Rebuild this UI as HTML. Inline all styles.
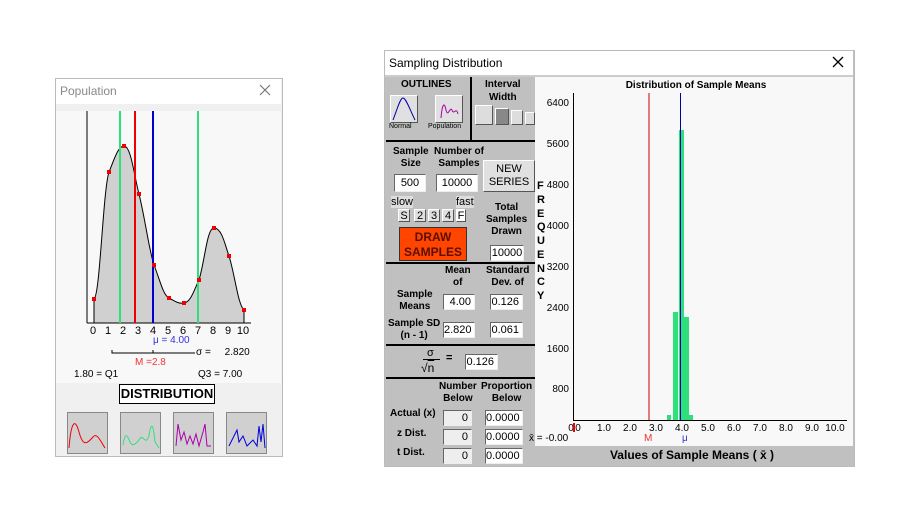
<!DOCTYPE html><html><head><style>
body{margin:0;width:918px;height:508px;background:#fff;position:relative;overflow:hidden;font-family:"Liberation Sans",Arial,sans-serif;}
.a{position:absolute;}
.t{position:absolute;white-space:nowrap;font-size:11px;color:#000;}
.b{font-weight:bold;font-size:10px;}
.in{position:absolute;background:#fff;border-top:1px solid #666;border-left:1px solid #666;border-bottom:1px solid #eee;border-right:1px solid #eee;font-size:11px;text-align:right;box-sizing:border-box;padding-right:3px;line-height:14px;height:16px;}
.btn{position:absolute;background:#e0e0e0;border:1px solid #fff;border-right-color:#555;border-bottom-color:#555;box-sizing:border-box;font-size:11px;text-align:center;}
.ln{position:absolute;background:#000;}
</style></head><body>
<!-- Population window -->
<div class="a" style="left:55px;top:78px;width:226px;height:377px;border:1px solid #bbb;background:#f0f0f0;"></div>
<div class="a" style="left:56px;top:79px;width:225px;height:25px;background:#fff;"></div>
<div class="t" style="left:60px;top:84px;font-size:12px;color:#888;">Population</div>
<svg class="a" style="left:259px;top:84px" width="12" height="12"><path d="M1,1 L11,11 M11,1 L1,11" stroke="#777" stroke-width="1.2"/></svg>
<div class="a" style="left:56px;top:111px;width:225px;height:272px;background:#f8f8f8;"></div>
<svg class="a" style="left:0;top:0" width="300" height="460">
<path d="M94,323 L94,299 C100,296 103,190 109,172 C114,160 118,146 124,146 C131,146 134,175 139,194 C145,218 149,250 154,265 C160,280 163,295 169,298 C175,301 178,304 184,303 C191,302 194,290 199,280 C205,260 207,228 214,228 C222,228 225,245 229,256 C235,275 238,305 244,310 L244,323 Z" fill="#d0d0d0" stroke="#000" stroke-width="1"/>
<line x1="87" y1="111" x2="87" y2="323" stroke="#000"/>
<line x1="87" y1="323" x2="251" y2="323" stroke="#000"/>
<line x1="120" y1="111" x2="120" y2="323" stroke="#2ee07a" stroke-width="2"/>
<line x1="135" y1="111" x2="135" y2="323" stroke="#e00" stroke-width="2"/>
<line x1="153" y1="111" x2="153" y2="323" stroke="#0000d0" stroke-width="2"/>
<line x1="198" y1="111" x2="198" y2="323" stroke="#2ee07a" stroke-width="2"/>
<g fill="#e00"><rect x="92" y="297" width="4" height="4"/><rect x="107" y="170" width="4" height="4"/><rect x="122" y="144" width="4" height="4"/><rect x="137" y="192" width="4" height="4"/><rect x="152" y="263" width="4" height="4"/><rect x="167" y="296" width="4" height="4"/><rect x="182" y="301" width="4" height="4"/><rect x="197" y="278" width="4" height="4"/><rect x="212" y="226" width="4" height="4"/><rect x="227" y="254" width="4" height="4"/><rect x="242" y="308" width="4" height="4"/></g>
<g font-family="Liberation Sans,Arial" font-size="11" text-anchor="middle"><text x="93" y="334">0</text><text x="108" y="334">1</text><text x="123" y="334">2</text><text x="138" y="334">3</text><text x="153" y="334">4</text><text x="168" y="334">5</text><text x="183" y="334">6</text><text x="198" y="334">7</text><text x="213" y="334">8</text><text x="228" y="334">9</text><text x="243" y="334">10</text></g>
<path d="M112,350 V353 H195 M153,350 V353" stroke="#000" fill="none"/>
</svg>
<div class="t" style="left:153px;top:335px;font-size:10px;color:#33d;">μ = 4.00</div>
<div class="t" style="left:196px;top:347px;font-size:10px;">σ =&nbsp;&nbsp;&nbsp;&nbsp;&nbsp;2.820</div>
<div class="t" style="left:135px;top:357px;font-size:10px;color:#e33;">M =2.8</div>
<div class="t" style="left:74px;top:369px;font-size:10px;">1.80 = Q1</div>
<div class="t" style="left:198px;top:369px;font-size:10px;">Q3 = 7.00</div>
<div class="a" style="left:119px;top:384px;width:96px;height:20px;background:#fff;border:1px solid #000;box-sizing:border-box;font-size:13px;font-weight:bold;text-align:center;line-height:18px;">DISTRIBUTION</div>
<svg class="a" style="left:67px;top:412px" width="202" height="43">
<g fill="#d0d0d0" stroke="#888"><rect x="0.5" y="0.5" width="40" height="41"/><rect x="53.5" y="0.5" width="40" height="41"/><rect x="106.5" y="0.5" width="40" height="41"/><rect x="159.5" y="0.5" width="40" height="41"/></g>
<path d="M2,36 C4,10 8,5 12,20 C16,35 20,32 26,25 C30,20 34,30 38,36" stroke="#e00" fill="none"/>
<path d="M56,33 C58,20 60,22 63,30 C66,36 70,30 72,28 C76,20 78,35 82,24 C84,10 86,10 88,30 L92,36" stroke="#2ee07a" fill="none"/>
<path d="M109,34 L111,12 L114,28 L117,20 L120,32 L123,24 L126,32 L129,22 L132,34 L136,20 L138,12 L140,34 L144,34" stroke="#a0a" fill="none"/>
<path d="M162,34 L166,26 L170,18 L172,30 L176,24 L180,34 L186,28 L190,34 L192,14 L194,30 L196,12 L198,36" stroke="#00d" fill="none"/>
</svg>

<!-- Sampling window -->
<div class="a" style="left:384px;top:50px;width:469px;height:415px;border:1px solid #bbb;background:#c0c0c0;"></div>
<div class="a" style="left:385px;top:51px;width:468px;height:24px;background:#fff;"></div>
<div class="t" style="left:389px;top:56px;font-size:12px;">Sampling Distribution</div>
<svg class="a" style="left:832px;top:56px" width="12" height="12"><path d="M1,1 L11,11 M11,1 L1,11" stroke="#000" stroke-width="1.3"/></svg>
<div class="a" style="left:535px;top:77px;width:318px;height:369px;background:#f8f8f8;"></div>
<div class="ln" style="left:385px;top:75px;width:468px;height:2px;background:#ccc"></div>
<!-- left panel lines -->
<div class="ln" style="left:470px;top:77px;width:2px;height:63px"></div>
<div class="ln" style="left:386px;top:140px;width:149px;height:2px"></div>
<div class="ln" style="left:386px;top:262px;width:149px;height:2px"></div>
<div class="ln" style="left:386px;top:344px;width:149px;height:2px"></div>
<div class="ln" style="left:386px;top:377px;width:149px;height:2px"></div>
<div class="t b" style="left:401px;top:79px;">OUTLINES</div>
<div class="t b" style="left:485px;top:78px;line-height:13px;text-align:center;">Interval<br>Width</div>
<div class="btn" style="left:390px;top:95px;width:28px;height:28px;"></div>
<svg class="a" style="left:391px;top:96px" width="26" height="26"><path d="M2,24 C6,14 9,2 12,2 C15,2 19,14 24,24" stroke="#00a" fill="none"/></svg>
<div class="t" style="left:389px;top:123px;font-size:7px;">Normal</div>
<div class="btn" style="left:435px;top:95px;width:28px;height:28px;"></div>
<svg class="a" style="left:436px;top:96px" width="26" height="26"><path d="M5,22 C6,10 8,4 10,14 C12,22 14,10 16,14 C18,20 20,10 22,18" stroke="#a0a" fill="none"/></svg>
<div class="t" style="left:428px;top:123px;font-size:7px;">Population</div>
<div class="btn" style="left:475px;top:105px;width:18px;height:20px;background:#ddd"></div>
<div class="btn" style="left:495px;top:108px;width:14px;height:17px;background:#888"></div>
<div class="btn" style="left:511px;top:110px;width:12px;height:15px;background:#ddd"></div>
<div class="btn" style="left:525px;top:112px;width:10px;height:13px;background:#ddd"></div>
<div class="t b" style="left:393px;top:146px;line-height:12px;text-align:center;">Sample<br>Size</div>
<div class="t b" style="left:434px;top:146px;line-height:12px;text-align:center;">Number of<br>Samples</div>
<div class="btn" style="left:483px;top:160px;width:52px;height:32px;line-height:13px;padding-top:2px;font-size:11px;">NEW<br>SERIES</div>
<div class="in" style="left:394px;top:174px;width:32px;height:18px;text-align:center;padding:0;line-height:17px;">500</div>
<div class="in" style="left:436px;top:174px;width:42px;height:18px;text-align:center;padding:0;line-height:17px;">10000</div>
<div class="t" style="left:391px;top:196px;background:#ddd;">slow</div>
<div class="t" style="left:456px;top:196px;background:#ddd;">fast</div>
<div class="btn" style="left:398px;top:209px;width:12px;height:13px;line-height:12px;">S</div>
<div class="btn" style="left:414px;top:209px;width:12px;height:13px;line-height:12px;">2</div>
<div class="btn" style="left:428px;top:209px;width:12px;height:13px;line-height:12px;">3</div>
<div class="btn" style="left:442px;top:209px;width:12px;height:13px;line-height:12px;">4</div>
<div class="btn" style="left:456px;top:209px;width:10px;height:13px;line-height:12px;background:#fff;">F</div>
<div class="t b" style="left:486px;top:202px;line-height:12px;text-align:center;">Total<br>Samples<br>Drawn</div>
<div class="a" style="left:399px;top:227px;width:68px;height:34px;background:#ff4500;border:1px solid #333;box-sizing:border-box;font-size:12px;font-weight:bold;color:#5a1000;text-align:center;line-height:15px;padding-top:2px;">DRAW<br>SAMPLES</div>
<div class="in" style="left:490px;top:245px;width:34px;text-align:center;padding:0;">10000</div>
<div class="t b" style="left:445px;top:265px;line-height:12px;text-align:center;">Mean<br>of</div>
<div class="t b" style="left:486px;top:265px;line-height:12px;text-align:center;">Standard<br>Dev. of</div>
<div class="t b" style="left:397px;top:289px;line-height:12px;text-align:center;">Sample<br>Means</div>
<div class="in" style="left:443px;top:294px;width:32px;">4.00</div>
<div class="in" style="left:490px;top:294px;width:33px;">0.126</div>
<div class="t b" style="left:388px;top:318px;line-height:12px;text-align:center;">Sample SD<br>(n - 1)</div>
<div class="in" style="left:443px;top:322px;width:32px;">2.820</div>
<div class="in" style="left:490px;top:322px;width:33px;">0.061</div>
<div class="t" style="left:427px;top:347px;">σ</div>
<div class="ln" style="left:423px;top:359px;width:17px;height:1px"></div>
<div class="t" style="left:421px;top:361px;font-size:12px;">√<u style="text-decoration:overline">n</u></div>
<div class="t b" style="left:446px;top:352px;font-size:11px;">=</div>
<div class="in" style="left:465px;top:354px;width:33px;">0.126</div>
<div class="t b" style="left:439px;top:381px;line-height:12px;text-align:center;">Number<br>Below</div>
<div class="t b" style="left:481px;top:381px;line-height:12px;text-align:center;">Proportion<br>Below</div>
<div class="t b" style="left:390px;top:408px;">Actual (x)</div>
<div class="t b" style="left:397px;top:428px;">z Dist.</div>
<div class="t b" style="left:397px;top:447px;">t Dist.</div>
<div class="in" style="left:443px;top:410px;width:29px;background:#eee">0</div>
<div class="in" style="left:485px;top:410px;width:38px;">0.0000</div>
<div class="in" style="left:443px;top:429px;width:29px;background:#eee">0</div>
<div class="in" style="left:485px;top:429px;width:38px;">0.0000</div>
<div class="in" style="left:443px;top:448px;width:29px;background:#eee">0</div>
<div class="in" style="left:485px;top:448px;width:38px;">0.0000</div>
<!-- chart -->
<svg class="a" style="left:0;top:0" width="918" height="508" font-family="Liberation Sans,Arial" font-size="10">
<text x="696" y="88" text-anchor="middle" font-weight="bold">Distribution of Sample Means</text>
<line x1="573.5" y1="93" x2="573.5" y2="420" stroke="#000"/>
<line x1="573" y1="420.5" x2="847" y2="420.5" stroke="#000"/>
<line x1="649" y1="93" x2="649" y2="420" stroke="#c00"/>
<rect x="667" y="415" width="4" height="5" fill="#2ee07a"/>
<rect x="673" y="312" width="5" height="108" fill="#2ee07a"/>
<rect x="679" y="130" width="5" height="290" fill="#2ee07a"/>
<rect x="684" y="317" width="5" height="103" fill="#2ee07a"/>
<rect x="689" y="415" width="4" height="5" fill="#2ee07a"/>
<line x1="680.5" y1="93" x2="680.5" y2="420" stroke="#00a"/>
<g text-anchor="end"><text x="569" y="106">6400</text><text x="569" y="147">5600</text><text x="569" y="188">4800</text><text x="569" y="229">4000</text><text x="569" y="270">3200</text><text x="569" y="311">2400</text><text x="569" y="352">1600</text><text x="569" y="392">800</text></g>
<g font-weight="bold" font-size="11"><text x="537" y="189">F</text><text x="537" y="203">R</text><text x="537" y="217">E</text><text x="537" y="230">Q</text><text x="537" y="244">U</text><text x="537" y="258">E</text><text x="537" y="272">N</text><text x="537" y="285">C</text><text x="537" y="299">Y</text></g>
<g text-anchor="middle"><text x="571" y="431">0</text><text x="578" y="431">0</text><text x="604" y="431">1.0</text><text x="630" y="431">2.0</text><text x="656" y="431">3.0</text><text x="682" y="431">4.0</text><text x="708" y="431">5.0</text><text x="734" y="431">6.0</text><text x="760" y="431">7.0</text><text x="786" y="431">8.0</text><text x="812" y="431">9.0</text><text x="835" y="431">10.0</text></g>
<rect x="573" y="423" width="2" height="9" fill="#e00"/>
<text x="529" y="441">x̄ = -0.00</text>
<text x="644" y="441" fill="#e33">M</text>
<text x="682" y="441" fill="#33c">μ</text>
<text x="692" y="459" text-anchor="middle" font-weight="bold" font-size="12">Values of Sample Means ( x̄ )</text>
</svg>
</body></html>
